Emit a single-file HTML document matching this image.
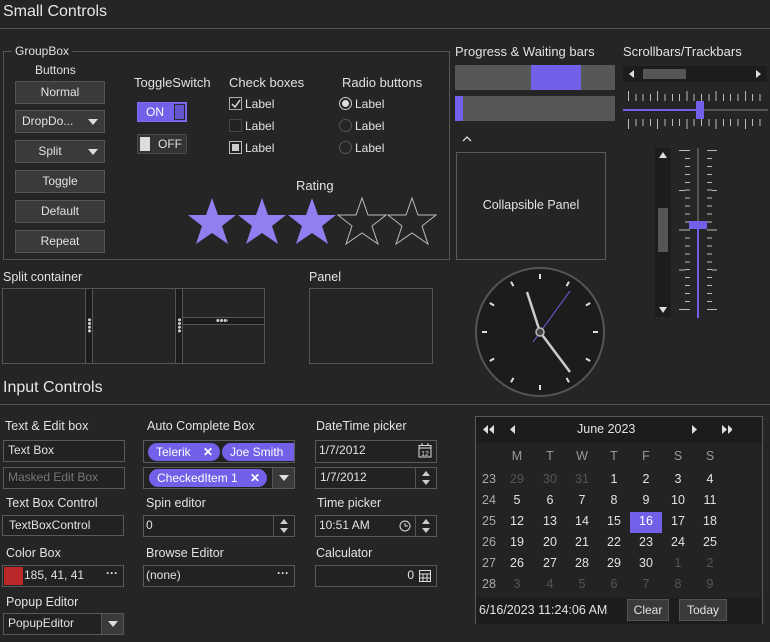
<!DOCTYPE html>
<html><head><meta charset="utf-8"><style>
*{margin:0;padding:0;box-sizing:border-box}
body{width:770px;height:642px;background:#252525;color:#e2e2e2;font-family:"Liberation Sans",sans-serif;font-size:12px;position:relative;overflow:hidden}
.a{position:absolute}
.h{font-size:16px;color:#e6e6e6}
.line{position:absolute;left:0;width:770px;height:1px;background:#555}
.btn{position:absolute;left:15px;width:90px;height:23px;background:#3a3a3a;border:1px solid #555;text-align:center;line-height:21px}
.box{position:absolute;border:1px solid #5a5a5a;background:#222;line-height:19px;padding-left:4px;white-space:nowrap}
.tri{position:absolute;width:0;height:0;border-left:5px solid transparent;border-right:5px solid transparent;border-top:6px solid #ddd}
.cb{position:absolute;width:13px;height:13px;border:1px solid #666;background:#222}
.rb{position:absolute;width:13px;height:13px;border:1px solid #555;border-radius:50%}
.chip{position:absolute;background:#7360e8;color:#fff;border-radius:9px;height:18px;line-height:18px;padding-left:8px}
.spin{position:absolute;right:0;top:0;width:21px;height:100%;border-left:1px solid #555}
.up,.dn{position:absolute;left:6px;width:0;height:0;border-left:4px solid transparent;border-right:4px solid transparent}
.up{top:3px;border-bottom:5px solid #ccc}.dn{bottom:3px;border-top:5px solid #ccc}
.cal{position:absolute;text-align:center;width:24px;font-size:12.5px}
.dv{position:absolute;width:3px;height:15px;background:radial-gradient(circle,#ccc 1.4px,transparent 1.7px) 0 0/3px 3.7px}
</style></head><body>
<div class="a h" style="left:3px;top:3px">Small Controls</div>
<div class="line" style="top:28px"></div>

<div class="a" style="left:3px;top:51px;width:447px;height:209px;border:1px solid #555"></div>
<div class="a" style="left:12px;top:44px;background:#252525;padding:0 3px">GroupBox</div>
<div class="a" style="left:35px;top:63px">Buttons</div>
<div class="btn" style="top:81px">Normal</div>
<div class="btn" style="top:110px;text-align:left;padding-left:6px">DropDo...</div><div class="tri" style="left:88px;top:119px"></div>
<div class="btn" style="top:140px;padding-right:20px">Split</div><div class="tri" style="left:88px;top:149px"></div>
<div class="btn" style="top:170px">Toggle</div>
<div class="btn" style="top:200px">Default</div>
<div class="btn" style="top:230px">Repeat</div>

<div class="a" style="left:134px;top:75px;font-size:13px">ToggleSwitch</div>
<div class="a" style="left:137px;top:102px;width:50px;height:20px;border:1px solid #7d6cf0;background:#7360e8"><span class="a" style="left:8px;top:2px;color:#fff">ON</span><div class="a" style="right:1px;top:1px;width:11px;height:16px;border:1px solid #2a2a2a;background:#6556d0"></div></div>
<div class="a" style="left:137px;top:134px;width:50px;height:20px;border:1px solid #4a4a4a;background:#333"><div class="a" style="left:2px;top:2px;width:10px;height:14px;background:#ddd"></div><span class="a" style="left:20px;top:2px">OFF</span></div>

<div class="a" style="left:229px;top:75px;font-size:13px">Check boxes</div>
<div class="cb" style="left:229px;top:97px;border-color:#aaa"><svg class="a" style="left:1px;top:1px" width="10" height="10"><path d="M1 5l3 3 5-7" stroke="#ddd" stroke-width="1.5" fill="none"/></svg></div>
<div class="cb" style="left:229px;top:119px;border-color:#444"></div>
<div class="cb" style="left:229px;top:141px;border-color:#bbb"><div class="a" style="left:2px;top:2px;width:7px;height:7px;background:#ccc"></div></div>
<div class="a" style="left:245px;top:97px">Label</div><div class="a" style="left:245px;top:119px">Label</div><div class="a" style="left:245px;top:141px">Label</div>

<div class="a" style="left:342px;top:75px;font-size:13px">Radio buttons</div>
<div class="rb" style="left:339px;top:97px;border-color:#ccc"><div class="a" style="left:2px;top:2px;width:7px;height:7px;border-radius:50%;background:#ddd"></div></div>
<div class="rb" style="left:339px;top:119px"></div><div class="rb" style="left:339px;top:141px"></div>
<div class="a" style="left:355px;top:97px">Label</div><div class="a" style="left:355px;top:119px">Label</div><div class="a" style="left:355px;top:141px">Label</div>

<div class="a" style="left:296px;top:178px;font-size:13px">Rating</div>
<svg class="a" style="left:187px;top:197px" width="252" height="50">
<defs><polygon id="st" points="24,1 30,18 48,18 34,29 40,47 24,36 8,47 14,29 0,18 18,18"/></defs>
<use href="#st" x="1" fill="#8f7ff0"/><use href="#st" x="51" fill="#8f7ff0"/><use href="#st" x="101" fill="#8f7ff0"/>
<use href="#st" x="151" fill="none" stroke="#bbb"/><use href="#st" x="201" fill="none" stroke="#bbb"/>
</svg>

<div class="a" style="left:455px;top:44px;font-size:13px">Progress &amp; Waiting bars</div>
<div class="a" style="left:455px;top:65px;width:160px;height:25px;background:#575757"><div class="a" style="left:76px;top:0;width:50px;height:25px;background:#7360e8"></div></div>
<div class="a" style="left:455px;top:96px;width:160px;height:25px;background:#575757"><div class="a" style="left:0;top:0;width:8px;height:25px;background:#7360e8"></div></div>
<svg class="a" style="left:462px;top:136px" width="10" height="6"><path d="M1 5l4-4 4 4" stroke="#ddd" stroke-width="1.3" fill="none"/></svg>
<div class="a" style="left:456px;top:152px;width:150px;height:108px;border:1px solid #5a5a5a;text-align:center;line-height:104px;font-size:12.5px">Collapsible Panel</div>

<svg class="a" style="left:470px;top:262px" width="140" height="140">
<g transform="translate(70,70)">
<circle r="64" fill="#1c1c1c" stroke="#555" stroke-width="2"/>
<g stroke="#ddd" stroke-width="2">
<line y1="-58" y2="-53"/><line y1="-58" y2="-53" transform="rotate(30)"/><line y1="-58" y2="-53" transform="rotate(60)"/><line y1="-58" y2="-53" transform="rotate(90)"/><line y1="-58" y2="-53" transform="rotate(120)"/><line y1="-58" y2="-53" transform="rotate(150)"/><line y1="-58" y2="-53" transform="rotate(180)"/><line y1="-58" y2="-53" transform="rotate(210)"/><line y1="-58" y2="-53" transform="rotate(240)"/><line y1="-58" y2="-53" transform="rotate(270)"/><line y1="-58" y2="-53" transform="rotate(300)"/><line y1="-58" y2="-53" transform="rotate(330)"/>
</g>
<line x1="0" y1="0" x2="-13" y2="-40" stroke="#ccc" stroke-width="2.5"/>
<line x1="0" y1="0" x2="30" y2="40" stroke="#ccc" stroke-width="2.5"/>
<line x1="-7" y1="10" x2="30" y2="-41" stroke="#7360e8" stroke-width="1"/>
<circle r="4" fill="#444" stroke="#bbb" stroke-width="1.5"/>
</g></svg>

<div class="a" style="left:623px;top:44px;font-size:13px">Scrollbars/Trackbars</div>
<div class="a" style="left:623px;top:66px;width:144px;height:16px;background:#1c1c1c">
<div class="a" style="left:20px;top:3px;width:43px;height:10px;background:#555"></div>
<div class="a" style="left:6px;top:4px;border-top:4px solid transparent;border-bottom:4px solid transparent;border-right:5px solid #ddd"></div>
<div class="a" style="right:6px;top:4px;border-top:4px solid transparent;border-bottom:4px solid transparent;border-left:5px solid #ddd"></div></div>
<div class="a" style="left:628px;top:94px;width:138px;height:7px;background:repeating-linear-gradient(90deg,#bbb 0 1px,transparent 1px 7.3px)"></div>
<div class="a" style="left:628px;top:91px;width:138px;height:4px;background:repeating-linear-gradient(90deg,#bbb 0 1px,transparent 1px 29.2px)"></div>
<div class="a" style="left:623px;top:109px;width:145px;height:2px;background:#555"></div>
<div class="a" style="left:623px;top:109px;width:78px;height:2px;background:#7360e8"></div>
<div class="a" style="left:696px;top:101px;width:8px;height:18px;background:#7360e8"></div>
<div class="a" style="left:628px;top:119px;width:138px;height:7px;background:repeating-linear-gradient(90deg,#bbb 0 1px,transparent 1px 7.3px)"></div>
<div class="a" style="left:628px;top:125px;width:138px;height:4px;background:repeating-linear-gradient(90deg,#bbb 0 1px,transparent 1px 29.2px)"></div>

<div class="a" style="left:655px;top:148px;width:16px;height:169px;background:#1c1c1c">
<div class="a" style="left:4px;top:4px;border-left:4px solid transparent;border-right:4px solid transparent;border-bottom:6px solid #ddd"></div>
<div class="a" style="left:3px;top:60px;width:10px;height:44px;background:#555"></div>
<div class="a" style="left:4px;bottom:4px;border-left:4px solid transparent;border-right:4px solid transparent;border-top:6px solid #ddd"></div></div>
<div class="a" style="left:685px;top:150px;width:5px;height:166px;background:repeating-linear-gradient(180deg,#bbb 0 1px,transparent 1px 7.95px)"></div>
<div class="a" style="left:679px;top:150px;width:6px;height:166px;background:repeating-linear-gradient(180deg,#bbb 0 1px,transparent 1px 39.75px)"></div>
<div class="a" style="left:707px;top:150px;width:5px;height:166px;background:repeating-linear-gradient(180deg,#bbb 0 1px,transparent 1px 7.95px)"></div>
<div class="a" style="left:712px;top:150px;width:5px;height:166px;background:repeating-linear-gradient(180deg,#bbb 0 1px,transparent 1px 39.75px)"></div>
<div class="a" style="left:697px;top:148px;width:2px;height:170px;background:#555"></div>
<div class="a" style="left:697px;top:225px;width:2px;height:93px;background:#7360e8"></div>
<div class="a" style="left:689px;top:221px;width:18px;height:8px;background:#7360e8"></div>

<div class="a" style="left:3px;top:270px;font-size:12.5px">Split container</div>
<div class="a" style="left:2px;top:288px;width:263px;height:76px;border:1px solid #555"></div>
<div class="a" style="left:85px;top:288px;width:8px;height:76px;border:1px solid #555;background:#1c1c1c"></div>
<div class="a" style="left:175px;top:288px;width:8px;height:76px;border:1px solid #555;background:#1c1c1c"></div>
<div class="a" style="left:182px;top:317px;width:83px;height:8px;border:1px solid #555;background:#1c1c1c"></div>
<div class="dv" style="left:88px;top:318px"></div>
<div class="dv" style="left:178px;top:318px"></div>
<div class="a" style="left:216px;top:319px;width:12px;height:3px;background:radial-gradient(circle,#ccc 1.4px,transparent 1.7px) 0 0/3.7px 3px"></div>
<div class="a" style="left:309px;top:270px;font-size:12.5px">Panel</div>
<div class="a" style="left:309px;top:288px;width:124px;height:76px;border:1px solid #555"></div>

<div class="a h" style="left:3px;top:379px">Input Controls</div>
<div class="line" style="top:404px"></div>

<div class="a" style="left:5px;top:419px;font-size:12.5px">Text &amp; Edit box</div>
<div class="box" style="left:3px;top:440px;width:122px;height:22px">Text Box</div>
<div class="box" style="left:3px;top:467px;width:122px;height:22px;color:#777">Masked Edit Box</div>
<div class="a" style="left:6px;top:496px;font-size:12.5px">Text Box Control</div>
<div class="box" style="left:2px;top:515px;width:122px;height:21px;padding-left:6px">TextBoxControl</div>
<div class="a" style="left:6px;top:546px;font-size:12.5px">Color Box</div>
<div class="box" style="left:2px;top:565px;width:122px;height:22px;padding-left:21px"><div class="a" style="left:1px;top:1px;width:19px;height:18px;background:#b92929"></div>185, 41, 41<span class="a" style="right:5px;top:-2px;font-weight:bold">···</span></div>
<div class="a" style="left:6px;top:595px;font-size:12.5px">Popup Editor</div>
<div class="box" style="left:3px;top:613px;width:121px;height:22px;padding-left:4px">PopupEditor<div class="a" style="right:0;top:0;width:22px;height:20px;background:#3a3a3a;border-left:1px solid #555"><div class="tri" style="left:6px;top:7px"></div></div></div>

<div class="a" style="left:147px;top:419px;font-size:12.5px">Auto Complete Box</div>
<div class="box" style="left:143px;top:440px;width:152px;height:23px;overflow:hidden">
<div class="chip" style="left:4px;top:2px;width:72px">Telerik<span class="a" style="right:7px;top:0;font-weight:bold">✕</span></div>
<div class="chip" style="left:78px;top:2px;width:80px;border-radius:9px 0 0 9px">Joe Smith</div></div>
<div class="box" style="left:143px;top:467px;width:152px;height:22px">
<div class="chip" style="left:5px;top:1px;width:118px">CheckedItem 1<span class="a" style="right:7px;top:0;font-weight:bold">✕</span></div>
<div class="a" style="right:0;top:0;width:22px;height:20px;background:#3a3a3a;border-left:1px solid #555"><div class="tri" style="left:6px;top:7px"></div></div></div>
<div class="a" style="left:146px;top:496px;font-size:12.5px">Spin editor</div>
<div class="box" style="left:143px;top:515px;width:152px;height:22px;padding-left:2px">0<div class="spin"><div class="up"></div><div class="dn"></div></div></div>
<div class="a" style="left:146px;top:546px;font-size:12.5px">Browse Editor</div>
<div class="box" style="left:143px;top:565px;width:152px;height:22px;padding-left:2px">(none)<span class="a" style="right:5px;top:-2px;font-weight:bold">···</span></div>

<div class="a" style="left:316px;top:419px;font-size:12.5px">DateTime picker</div>
<div class="box" style="left:315px;top:440px;width:122px;height:23px;padding-left:3px">1/7/2012
<svg class="a" style="right:4px;top:2px" width="14" height="15"><rect x="1" y="2.5" width="12" height="11.5" fill="none" stroke="#ddd"/><line x1="1" y1="5" x2="13" y2="5" stroke="#ddd"/><line x1="4" y1="0" x2="4" y2="3" stroke="#ddd"/><line x1="10" y1="0" x2="10" y2="3" stroke="#ddd"/><text x="7" y="13" font-size="7" fill="#ddd" text-anchor="middle" font-family="Liberation Sans">12</text></svg></div>
<div class="box" style="left:315px;top:467px;width:122px;height:22px;padding-left:4px">1/7/2012<div class="spin"><div class="up"></div><div class="dn"></div></div></div>
<div class="a" style="left:317px;top:496px;font-size:12.5px">Time picker</div>
<div class="box" style="left:315px;top:515px;width:122px;height:22px;padding-left:3px">10:51 AM
<svg class="a" style="right:25px;top:4px" width="12" height="12"><circle cx="6" cy="6" r="5" fill="none" stroke="#ddd"/><path d="M6 3v3h3" stroke="#ddd" fill="none"/></svg>
<div class="spin"><div class="up"></div><div class="dn"></div></div></div>
<div class="a" style="left:316px;top:546px;font-size:12.5px">Calculator</div>
<div class="box" style="left:315px;top:565px;width:122px;height:22px;text-align:right;padding-right:22px">0
<svg class="a" style="right:5px;top:4px" width="12" height="12"><rect x="0.5" y="0.5" width="11" height="11" fill="none" stroke="#ddd"/><path d="M0 4h12M0 8h12M4 4v8M8 4v8" stroke="#ddd"/></svg></div>

<div class="a" style="left:475px;top:416px;width:288px;height:208px;border:1px solid #5a5a5a;background:#232323">
<div class="a" style="left:0;top:0;width:286px;height:26px;background:#1c1c1c"></div>
<div class="a" style="left:0;top:181px;width:286px;height:26px;background:#1c1c1c"></div>
</div>
<svg class="a" style="left:482px;top:425px" width="250" height="10" fill="#ddd">
<path d="M6 0v9L1 4.5zM12 0v9L7 4.5zM33 0v9l-5-4.5z"/>
<path d="M210 0v9l5-4.5zM246 0v9l5-4.5zM240 0v9l5-4.5z"/>
</svg>
<div class="a" style="left:577px;top:422px;font-size:12.5px">June 2023</div>
<div class="a" style="left:630px;top:512px;width:32px;height:21px;background:#7360e8"></div>
<div class="a" style="left:479px;top:603px;font-size:12.5px">6/16/2023 11:24:06 AM</div>
<div class="a" style="left:627px;top:599px;width:42px;height:22px;background:#3a3a3a;border:1px solid #555;text-align:center;line-height:20px">Clear</div>
<div class="a" style="left:679px;top:599px;width:48px;height:22px;background:#3a3a3a;border:1px solid #555;text-align:center;line-height:20px">Today</div>

<div class="cal a" style="left:505px;top:449px;color:#999">M</div><div class="cal a" style="left:538px;top:449px;color:#999">T</div><div class="cal a" style="left:570px;top:449px;color:#999">W</div><div class="cal a" style="left:602px;top:449px;color:#999">T</div><div class="cal a" style="left:634px;top:449px;color:#999">F</div><div class="cal a" style="left:666px;top:449px;color:#999">S</div><div class="cal a" style="left:698px;top:449px;color:#999">S</div>

<div class="cal a" style="left:477px;top:472px;color:#aaa">23</div><div class="cal a" style="left:505px;top:472px;color:#555">29</div><div class="cal a" style="left:538px;top:472px;color:#555">30</div><div class="cal a" style="left:570px;top:472px;color:#555">31</div><div class="cal a" style="left:602px;top:472px">1</div><div class="cal a" style="left:634px;top:472px">2</div><div class="cal a" style="left:666px;top:472px">3</div><div class="cal a" style="left:698px;top:472px">4</div>
<div class="cal a" style="left:477px;top:493px;color:#aaa">24</div><div class="cal a" style="left:505px;top:493px">5</div><div class="cal a" style="left:538px;top:493px">6</div><div class="cal a" style="left:570px;top:493px">7</div><div class="cal a" style="left:602px;top:493px">8</div><div class="cal a" style="left:634px;top:493px">9</div><div class="cal a" style="left:666px;top:493px">10</div><div class="cal a" style="left:698px;top:493px">11</div>
<div class="cal a" style="left:477px;top:514px;color:#aaa">25</div><div class="cal a" style="left:505px;top:514px">12</div><div class="cal a" style="left:538px;top:514px">13</div><div class="cal a" style="left:570px;top:514px">14</div><div class="cal a" style="left:602px;top:514px">15</div><div class="cal a" style="left:634px;top:514px;color:#fff">16</div><div class="cal a" style="left:666px;top:514px">17</div><div class="cal a" style="left:698px;top:514px">18</div>
<div class="cal a" style="left:477px;top:535px;color:#aaa">26</div><div class="cal a" style="left:505px;top:535px">19</div><div class="cal a" style="left:538px;top:535px">20</div><div class="cal a" style="left:570px;top:535px">21</div><div class="cal a" style="left:602px;top:535px">22</div><div class="cal a" style="left:634px;top:535px">23</div><div class="cal a" style="left:666px;top:535px">24</div><div class="cal a" style="left:698px;top:535px">25</div>
<div class="cal a" style="left:477px;top:556px;color:#aaa">27</div><div class="cal a" style="left:505px;top:556px">26</div><div class="cal a" style="left:538px;top:556px">27</div><div class="cal a" style="left:570px;top:556px">28</div><div class="cal a" style="left:602px;top:556px">29</div><div class="cal a" style="left:634px;top:556px">30</div><div class="cal a" style="left:666px;top:556px;color:#555">1</div><div class="cal a" style="left:698px;top:556px;color:#555">2</div>
<div class="cal a" style="left:477px;top:577px;color:#aaa">28</div><div class="cal a" style="left:505px;top:577px;color:#555">3</div><div class="cal a" style="left:538px;top:577px;color:#555">4</div><div class="cal a" style="left:570px;top:577px;color:#555">5</div><div class="cal a" style="left:602px;top:577px;color:#555">6</div><div class="cal a" style="left:634px;top:577px;color:#555">7</div><div class="cal a" style="left:666px;top:577px;color:#555">8</div><div class="cal a" style="left:698px;top:577px;color:#555">9</div>
</body></html>
